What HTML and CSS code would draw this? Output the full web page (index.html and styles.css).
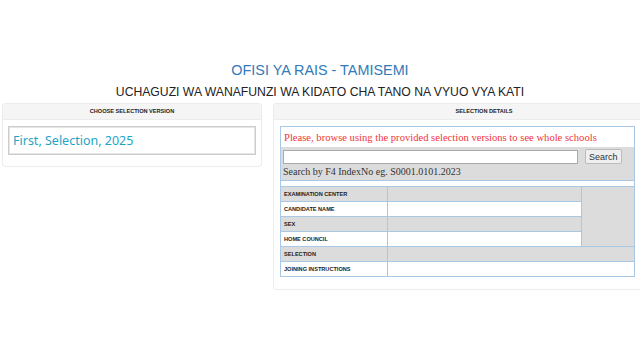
FILE: index.html
```html
<!DOCTYPE html>
<html lang="sw">
<head>
    <meta charset="UTF-8">
    <meta name="viewport" content="width=device-width, initial-scale=1.0">
    <title>OFISI YA RAIS - TAMISEMI</title>
    <link rel="stylesheet" href="styles.css">
</head>
<body>
    <div class="page">
        <h1 class="title">OFISI YA RAIS - TAMISEMI</h1>
        <h2 class="subtitle">UCHAGUZI WA WANAFUNZI WA KIDATO CHA TANO NA VYUO VYA KATI</h2>

        <div class="panels">
            <!-- Matoleo ya uchaguzi -->
            <div class="panel panel-left">
                <div class="panel-heading">CHOOSE SELECTION VERSION</div>
                <div class="panel-body">
                    <a href="#" class="version-link">First, Selection, 2025</a>
                </div>
            </div>

            <!-- Maelezo ya uchaguzi -->
            <div class="panel panel-right">
                <div class="panel-heading">SELECTION DETAILS</div>
                <div class="panel-body">
                    <table class="details">
                        <tr>
                            <td colspan="3" class="notice">Please, browse using the provided selection versions to see whole schools</td>
                        </tr>
                        <tr class="search-row">
                            <td colspan="3">
                                <div class="search-line">
                                    <input type="text" class="search-input">
                                    <button class="search-btn">Search</button>
                                </div>
                                <p class="search-help">Search by F4 IndexNo eg. S0001.0101.2023</p>
                            </td>
                        </tr>
                        <tr class="spacer"><td colspan="3"></td></tr>
                        <tr class="grey">
                            <th>EXAMINATION CENTER</th>
                            <td></td>
                            <td rowspan="4" class="photo"></td>
                        </tr>
                        <tr>
                            <th>CANDIDATE NAME</th>
                            <td></td>
                        </tr>
                        <tr class="grey">
                            <th>SEX</th>
                            <td></td>
                        </tr>
                        <tr>
                            <th>HOME COUNCIL</th>
                            <td></td>
                        </tr>
                        <tr class="grey">
                            <th>SELECTION</th>
                            <td colspan="2"></td>
                        </tr>
                        <tr>
                            <th>JOINING INSTRUCTIONS</th>
                            <td colspan="2"></td>
                        </tr>
                    </table>
                </div>
            </div>
        </div>
    </div>
</body>
</html>
```

FILE: styles.css
```css
body {
    margin: 0;
    font-family: "Liberation Sans", Arial, sans-serif;
    background-color: #fff;
    color: #333;
    overflow: hidden;
}
.page {
    padding-top: 60px;
}
.title {
    margin: 0;
    text-align: center;
    font-size: 14.4px;
    font-weight: normal;
    color: #337ab7;
    line-height: 20px;
}
.subtitle {
    margin: 3px 0 0 0;
    text-align: center;
    font-size: 12.2px;
    font-weight: normal;
    color: #222;
    line-height: 18px;
    transform: scaleY(1.1);
}
.panels {
    display: flex;
    gap: 11px;
    margin-top: 2px;
    padding-left: 2px;
    width: 700px;
}
.panel {
    border: 1px solid #ececec;
    border-radius: 3px;
    background: #fff;
}
.panel-left {
    width: 258px;
    height: 62px;
}
.panel-right {
    width: 420px;
    height: 185px;
}
.panel-heading {
    background-color: #f5f5f5;
    border-bottom: 1px solid #ececec;
    height: 15px;
    line-height: 15px;
    text-align: center;
    font-size: 5.6px;
    font-weight: bold;
    color: #222;
}
.panel-body {
    padding: 6px 5px;
}
.panel-right .panel-body {
    padding: 6px 6px;
}
.version-link {
    display: block;
    border: 1px solid #ccc;
    box-shadow: inset 0 0 0 1px #e6e6e6;
    padding: 0 4px;
    height: 27px;
    line-height: 27px;
    font-family: "Noto Sans", sans-serif;
    font-size: 12.5px;
    color: #1ea5c4;
    text-decoration: none;
}
.details {
    width: 355px;
    border-collapse: collapse;
    border: 1px solid #a9c8e6;
}
.details td,
.details th {
    border: 1px solid #a9c8e6;
    padding: 0 3px;
}
.details th {
    width: 100px;
    height: 14px;
    text-align: left;
    font-size: 5.6px;
    font-weight: bold;
    color: #222;
    white-space: nowrap;
}
.notice {
    height: 20px;
    font-family: "Liberation Serif", serif;
    font-size: 10.6px;
    color: #f2333a;
    border-bottom: none !important;
}
.search-row td {
    background-color: #dcdcdc;
    padding: 2px 2px 3px 2px;
    border-top: none;
}
.search-line {
    display: flex;
    align-items: center;
    gap: 7px;
}
.search-input {
    width: 293px;
    height: 12px;
    padding: 0;
    border: 1px solid #aaa;
    background: #fff;
    margin: 0;
}
.search-btn {
    font-family: "Liberation Sans", Arial, sans-serif;
    font-size: 9px;
    padding: 1px 3px;
    height: 15px;
    border: 1px solid #bbb;
    border-radius: 2px;
    background: #efefef;
    color: #333;
}
.search-help {
    margin: 2px 0 0 0;
    font-family: "Liberation Serif", serif;
    font-size: 10px;
    color: #333;
}
.spacer td {
    height: 5px;
    padding: 0;
    background: #fff;
}
.grey th,
.grey td {
    background-color: #dcdcdc;
}
.photo {
    width: 46px;
    background-color: #dcdcdc;
}
```
